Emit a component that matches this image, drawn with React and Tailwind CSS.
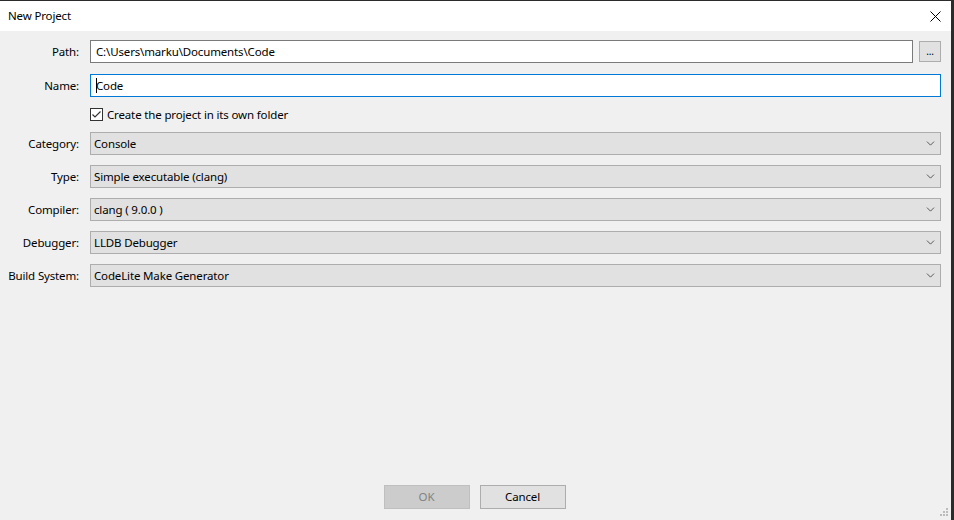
import { ChevronDown } from 'lucide-react';

const FONT = { fontFamily: '"Segoe UI", "Noto Sans", sans-serif' };

const SELECTS = [
  { label: 'Category:', value: 'Console' },
  { label: 'Type:', value: 'Simple executable (clang)' },
  { label: 'Compiler:', value: 'clang ( 9.0.0 )' },
  { label: 'Debugger:', value: 'LLDB Debugger' },
  { label: 'Build System:', value: 'CodeLite Make Generator' },
];

function Row({ label, children, className = '' }) {
  return (
    <div className={`flex items-center ${className}`}>
      <div className="w-[80px] shrink-0 text-right pr-[1px] text-black">{label}</div>
      <div className="flex-1 ml-[10px] flex items-center">{children}</div>
    </div>
  );
}

function Select({ value }) {
  return (
    <div className="flex-1 h-[23px] flex items-center justify-between bg-[#e1e1e1] border border-[#adadad] pl-[3px] pr-[3px]">
      <span className="text-black">{value}</span>
      <ChevronDown size={13} strokeWidth={1.6} className="text-[#444]" />
    </div>
  );
}

export default function App() {
  return (
    <div className="w-[954px] h-[520px] bg-[#2b2b2b] pt-[1px] pr-[3px] text-[11.5px] tracking-[-0.15px] leading-none" style={FONT}>
      <div className="h-full flex flex-col bg-[#f0f0f0]">
        {/* Title bar */}
        <div className="h-[30px] shrink-0 bg-white flex items-center justify-between pl-[8px] pr-[10px]">
          <span className="text-black">New Project</span>
          <svg width="11" height="11" viewBox="0 0 11 11">
            <path d="M0.5 0.5L10.5 10.5M10.5 0.5L0.5 10.5" stroke="#000" strokeWidth="1" />
          </svg>
        </div>

        <div className="flex-1 flex flex-col pr-[10px] pt-[9px]">
          <Row label="Path:">
            <div className="flex-1 h-[23px] flex items-center bg-white border border-[#7a7a7a] pl-[5px]">
              C:\Users\marku\Documents\Code
            </div>
            <button className="ml-[6px] w-[22px] h-[21px] bg-[#e1e1e1] border border-[#adadad] flex items-end justify-center pb-[5px] text-[10px]">
              ...
            </button>
          </Row>

          <Row label="Name:" className="mt-[11px]">
            <div className="flex-1 h-[23px] flex items-center bg-white border border-[#0078d7] pl-[5px]">
              <span className="w-[1px] h-[15px] bg-black -mr-[1px]" />
              <span>Code</span>
            </div>
          </Row>

          <Row label="" className="mt-[11px]">
            <div className="flex items-center gap-[4px]">
              <svg width="13" height="13" viewBox="0 0 13 13">
                <rect x="0.5" y="0.5" width="12" height="12" fill="#fff" stroke="#333" />
                <path d="M2.5 6.5L5 9L10.5 3.5" fill="none" stroke="#333" strokeWidth="1.2" />
              </svg>
              <span className="text-black">Create the project in its own folder</span>
            </div>
          </Row>

          <div className="flex flex-col gap-[10px] mt-[11px]">
            {SELECTS.map((s) => (
              <Row key={s.label} label={s.label}>
                <Select value={s.value} />
              </Row>
            ))}
          </div>

          <div className="flex-1" />

          <div className="flex justify-center gap-[10px] pl-[8px] mb-[11px]">
            <button className="w-[86px] h-[24px] bg-[#cccccc] border border-[#bfbfbf] text-[#838383]">OK</button>
            <button className="w-[86px] h-[24px] bg-[#e1e1e1] border border-[#adadad] text-black">Cancel</button>
          </div>
        </div>

        <div className="relative h-0">
          <svg width="9" height="9" viewBox="0 0 9 9" className="absolute right-[3px] bottom-[3px]">
            <rect x="7" y="0" width="2" height="2" fill="#bcbcbc" />
            <rect x="4" y="3" width="2" height="2" fill="#bcbcbc" />
            <rect x="7" y="3" width="2" height="2" fill="#bcbcbc" />
            <rect x="1" y="6" width="2" height="2" fill="#bcbcbc" />
            <rect x="4" y="6" width="2" height="2" fill="#bcbcbc" />
            <rect x="7" y="6" width="2" height="2" fill="#bcbcbc" />
          </svg>
        </div>
      </div>
    </div>
  );
}
